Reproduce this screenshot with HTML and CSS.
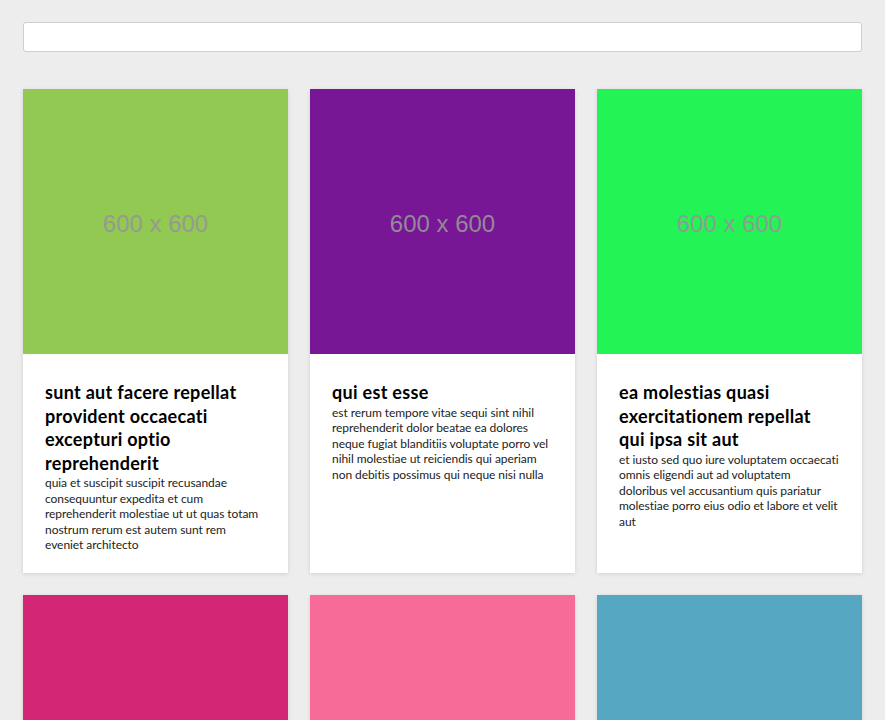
FILE: index.html
```html
<!DOCTYPE html>
<html>
<head>
<meta charset="utf-8">
<link rel="stylesheet" href="styles.css">
</head>
<body>
<div class="page">
  <input class="search" type="text">
  <div class="grid">
    <div class="card">
      <div class="thumb c1"><span>600 x 600</span></div>
      <div class="body">
        <h3 class="title">sunt aut facere repellat provident occaecati excepturi optio reprehenderit</h3>
        <p class="text">quia et suscipit suscipit recusandae consequuntur expedita et cum reprehenderit molestiae ut ut quas totam nostrum rerum est autem sunt rem eveniet architecto</p>
      </div>
    </div>
    <div class="card">
      <div class="thumb c2"><span>600 x 600</span></div>
      <div class="body">
        <h3 class="title">qui est esse</h3>
        <p class="text">est rerum tempore vitae sequi sint nihil reprehenderit dolor beatae ea dolores neque fugiat blanditiis voluptate porro vel nihil molestiae ut reiciendis qui aperiam non debitis possimus qui neque nisi nulla</p>
      </div>
    </div>
    <div class="card">
      <div class="thumb c3"><span>600 x 600</span></div>
      <div class="body">
        <h3 class="title">ea molestias quasi exercitationem repellat qui ipsa sit aut</h3>
        <p class="text">et iusto sed quo iure voluptatem occaecati omnis eligendi aut ad voluptatem doloribus vel accusantium quis pariatur molestiae porro eius odio et labore et velit aut</p>
      </div>
    </div>
    <div class="card">
      <div class="thumb c4"><span>600 x 600</span></div>
      <div class="body">
        <h3 class="title">eum et est occaecati</h3>
        <p class="text">ullam et saepe reiciendis voluptatem adipisci sit amet autem assumenda provident rerum culpa quis hic commodi nesciunt rem tenetur doloremque ipsam iure quis sunt voluptatem rerum illo velit</p>
      </div>
    </div>
    <div class="card">
      <div class="thumb c5"><span>600 x 600</span></div>
      <div class="body">
        <h3 class="title">nesciunt quas odio</h3>
        <p class="text">repudiandae veniam quaerat sunt sed alias aut fugiat sit autem sed est voluptatem omnis possimus esse voluptatibus quis est aut tenetur dolor neque</p>
      </div>
    </div>
    <div class="card">
      <div class="thumb c6"><span>600 x 600</span></div>
      <div class="body">
        <h3 class="title">dolorem eum magni eos aperiam quia</h3>
        <p class="text">ut aspernatur corporis harum nihil quis provident sequi mollitia nobis aliquid molestiae perspiciatis et ea nemo ab reprehenderit accusantium quas voluptate dolores velit et doloremque molestiae</p>
      </div>
    </div>
  </div>
</div>
</body>
</html>
```

FILE: styles.css
```css
html, body {
  margin: 0;
  padding: 0;
  background: #ededed;
}
body {
  font-family: Lato, "Noto Sans", sans-serif;
  color: #111;
}
.page {
  padding: 22px 23px;
}
.search {
  display: block;
  box-sizing: border-box;
  width: 100%;
  height: 30px;
  margin: 0 0 37px 0;
  border: 1px solid #cfcfcf;
  border-radius: 3px;
  background: #fff;
  outline: none;
}
.grid {
  display: grid;
  grid-template-columns: repeat(3, 1fr);
  gap: 22px;
}
.card {
  background: #fff;
  box-shadow: 0 1px 4px rgba(0, 0, 0, 0.12);
  display: flex;
  flex-direction: column;
}
.thumb {
  height: 265px;
  display: flex;
  align-items: center;
  justify-content: center;
  padding-top: 4px;
  box-sizing: border-box;
}
.thumb span {
  font-family: "Liberation Sans", Arial, sans-serif;
  font-size: 24px;
  color: #969696;
  opacity: 0.9;
}
.c1 { background: #92c952; }
.c2 { background: #771796; }
.c3 { background: #24f355; }
.c4 { background: #d32776; }
.c5 { background: #f66b97; }
.c6 { background: #56a8c2; }
.body {
  padding: 27px 21px 20px 22px;
}
.title {
  margin: 0;
  font-size: 18px;
  line-height: 23.5px;
  font-weight: bold;
  letter-spacing: 0.3px;
  color: #000;
}
.text {
  margin: 0;
  font-size: 12px;
  line-height: 15.6px;
  letter-spacing: -0.06px;
  color: #222;
}
```
